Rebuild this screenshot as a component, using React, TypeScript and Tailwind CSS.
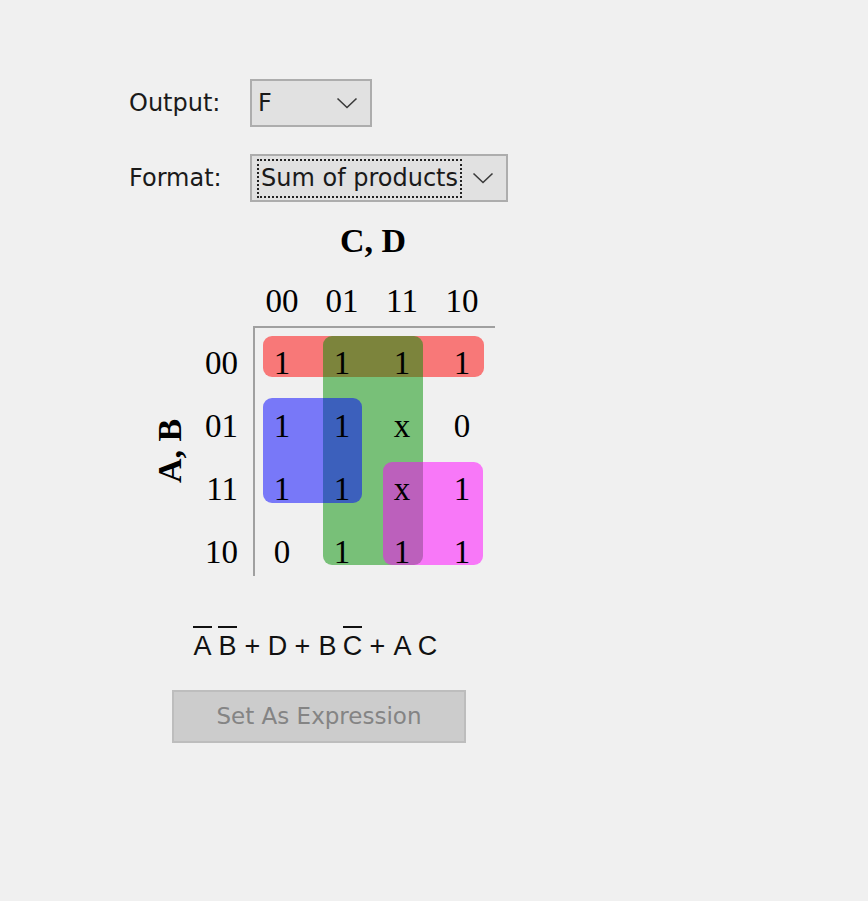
const cells = [
  ["1", "1", "1", "1"],
  ["1", "1", "x", "0"],
  ["1", "1", "x", "1"],
  ["0", "1", "1", "1"],
];

const codes = ["00", "01", "11", "10"];

const terms: { t: string; bar?: boolean }[] = [
  { t: "A", bar: true },
  { t: "B", bar: true },
  { t: "+" },
  { t: "D" },
  { t: "+" },
  { t: "B" },
  { t: "C", bar: true },
  { t: "+" },
  { t: "A" },
  { t: "C" },
];

function Chevron() {
  return (
    <svg width="22" height="12" viewBox="0 0 22 12" fill="none">
      <path d="M1.5 1.5 L11 10.5 L20.5 1.5" stroke="#3a3a3a" strokeWidth="1.6" />
    </svg>
  );
}

export default function App() {
  return (
    <div className="min-h-[901px] w-full bg-[#f0f0f0] pt-[79px] font-['DejaVu_Sans',sans-serif] text-[24px] text-[#1a1a1a]">
      {/* form */}
      <div className="flex items-center pl-[129px]">
        <div className="w-[121px] leading-none">Output:</div>
        <div className="flex h-[48px] w-[122px] items-center border-2 border-[#adadad] bg-[#e1e1e1] pl-[6px] pr-[12px] leading-none">
          <span>F</span>
          <span className="ml-auto">
            <Chevron />
          </span>
        </div>
      </div>
      <div className="mt-[27px] flex items-center pl-[129px]">
        <div className="w-[121px] leading-none">Format:</div>
        <div className="flex h-[48px] w-[258px] items-center border-2 border-[#adadad] bg-[#e1e1e1] pl-[5px] pr-[12px] leading-none">
          <span className="flex h-[39px] items-center border-2 border-dotted border-[#222] px-[2px]">
            Sum of products
          </span>
          <span className="ml-auto">
            <Chevron />
          </span>
        </div>
      </div>

      {/* karnaugh map */}
      <div className="font-['Liberation_Serif',serif] text-black">
        <div className="mt-[22px] ml-[253px] w-[240px] text-center text-[34px] font-bold leading-[34px]">
          C, D
        </div>
        <div className="mt-[27px] ml-[252px] flex text-[33px] leading-[33px]">
          {codes.map((c) => (
            <div key={c} className="w-[60px] text-center">
              {c}
            </div>
          ))}
        </div>
        <div className="mt-[8px] ml-[150px] flex h-[250px]">
          <div className="flex w-[40px] items-center justify-center">
            <div className="-rotate-90 whitespace-nowrap text-[34px] font-bold leading-[34px]">A, B</div>
          </div>
          <div className="flex w-[63px] flex-col pt-[6px] pr-[15px] text-[33px] leading-[33px]">
            {codes.map((c) => (
              <div key={c} className="flex h-[63px] shrink-0 items-center justify-end">
                {c}
              </div>
            ))}
          </div>
          <div className="relative h-[250px] w-[242px] border-l-2 border-t-2 border-[#a0a0a0]">
            <div className="absolute left-[8px] top-[8px] h-[41px] w-[221px] rounded-[9px] bg-[rgba(255,0,0,0.5)]" />
            <div className="absolute left-[68px] top-[8px] h-[229px] w-[100px] rounded-[9px] bg-[rgba(0,144,0,0.5)]" />
            <div className="absolute left-[8px] top-[70px] h-[105px] w-[99px] rounded-[9px] bg-[rgba(0,0,255,0.5)]" />
            <div className="absolute left-[128px] top-[134px] h-[103px] w-[100px] rounded-[9px] bg-[rgba(255,0,255,0.5)]" />
            <div className="relative -ml-[3px] mt-[4px] grid grid-cols-[repeat(4,60px)] text-[33px] leading-[33px]">
              {cells.flat().map((v, i) => (
                <div key={i} className="flex h-[63px] items-center justify-center">
                  {v}
                </div>
              ))}
            </div>
          </div>
        </div>
      </div>

      {/* expression */}
      <div className="mt-[50px] ml-[190px] flex font-['Liberation_Sans',sans-serif] text-[27px] leading-[26px] text-[#111]">
        {terms.map((x, i) => (
          <div key={i} className="flex w-[25px] flex-col items-center">
            <div className={`h-[2px] w-[19px] ${x.bar ? "bg-[#111]" : "bg-transparent"}`} />
            <div className="mt-[5px]">{x.t}</div>
          </div>
        ))}
      </div>

      <button
        disabled
        className="mt-[31px] ml-[172px] flex h-[53px] w-[294px] items-center justify-center border-2 border-[#bdbdbd] bg-[#cccccc] text-[23px] leading-none text-[#848484]"
      >
        Set As Expression
      </button>
    </div>
  );
}
